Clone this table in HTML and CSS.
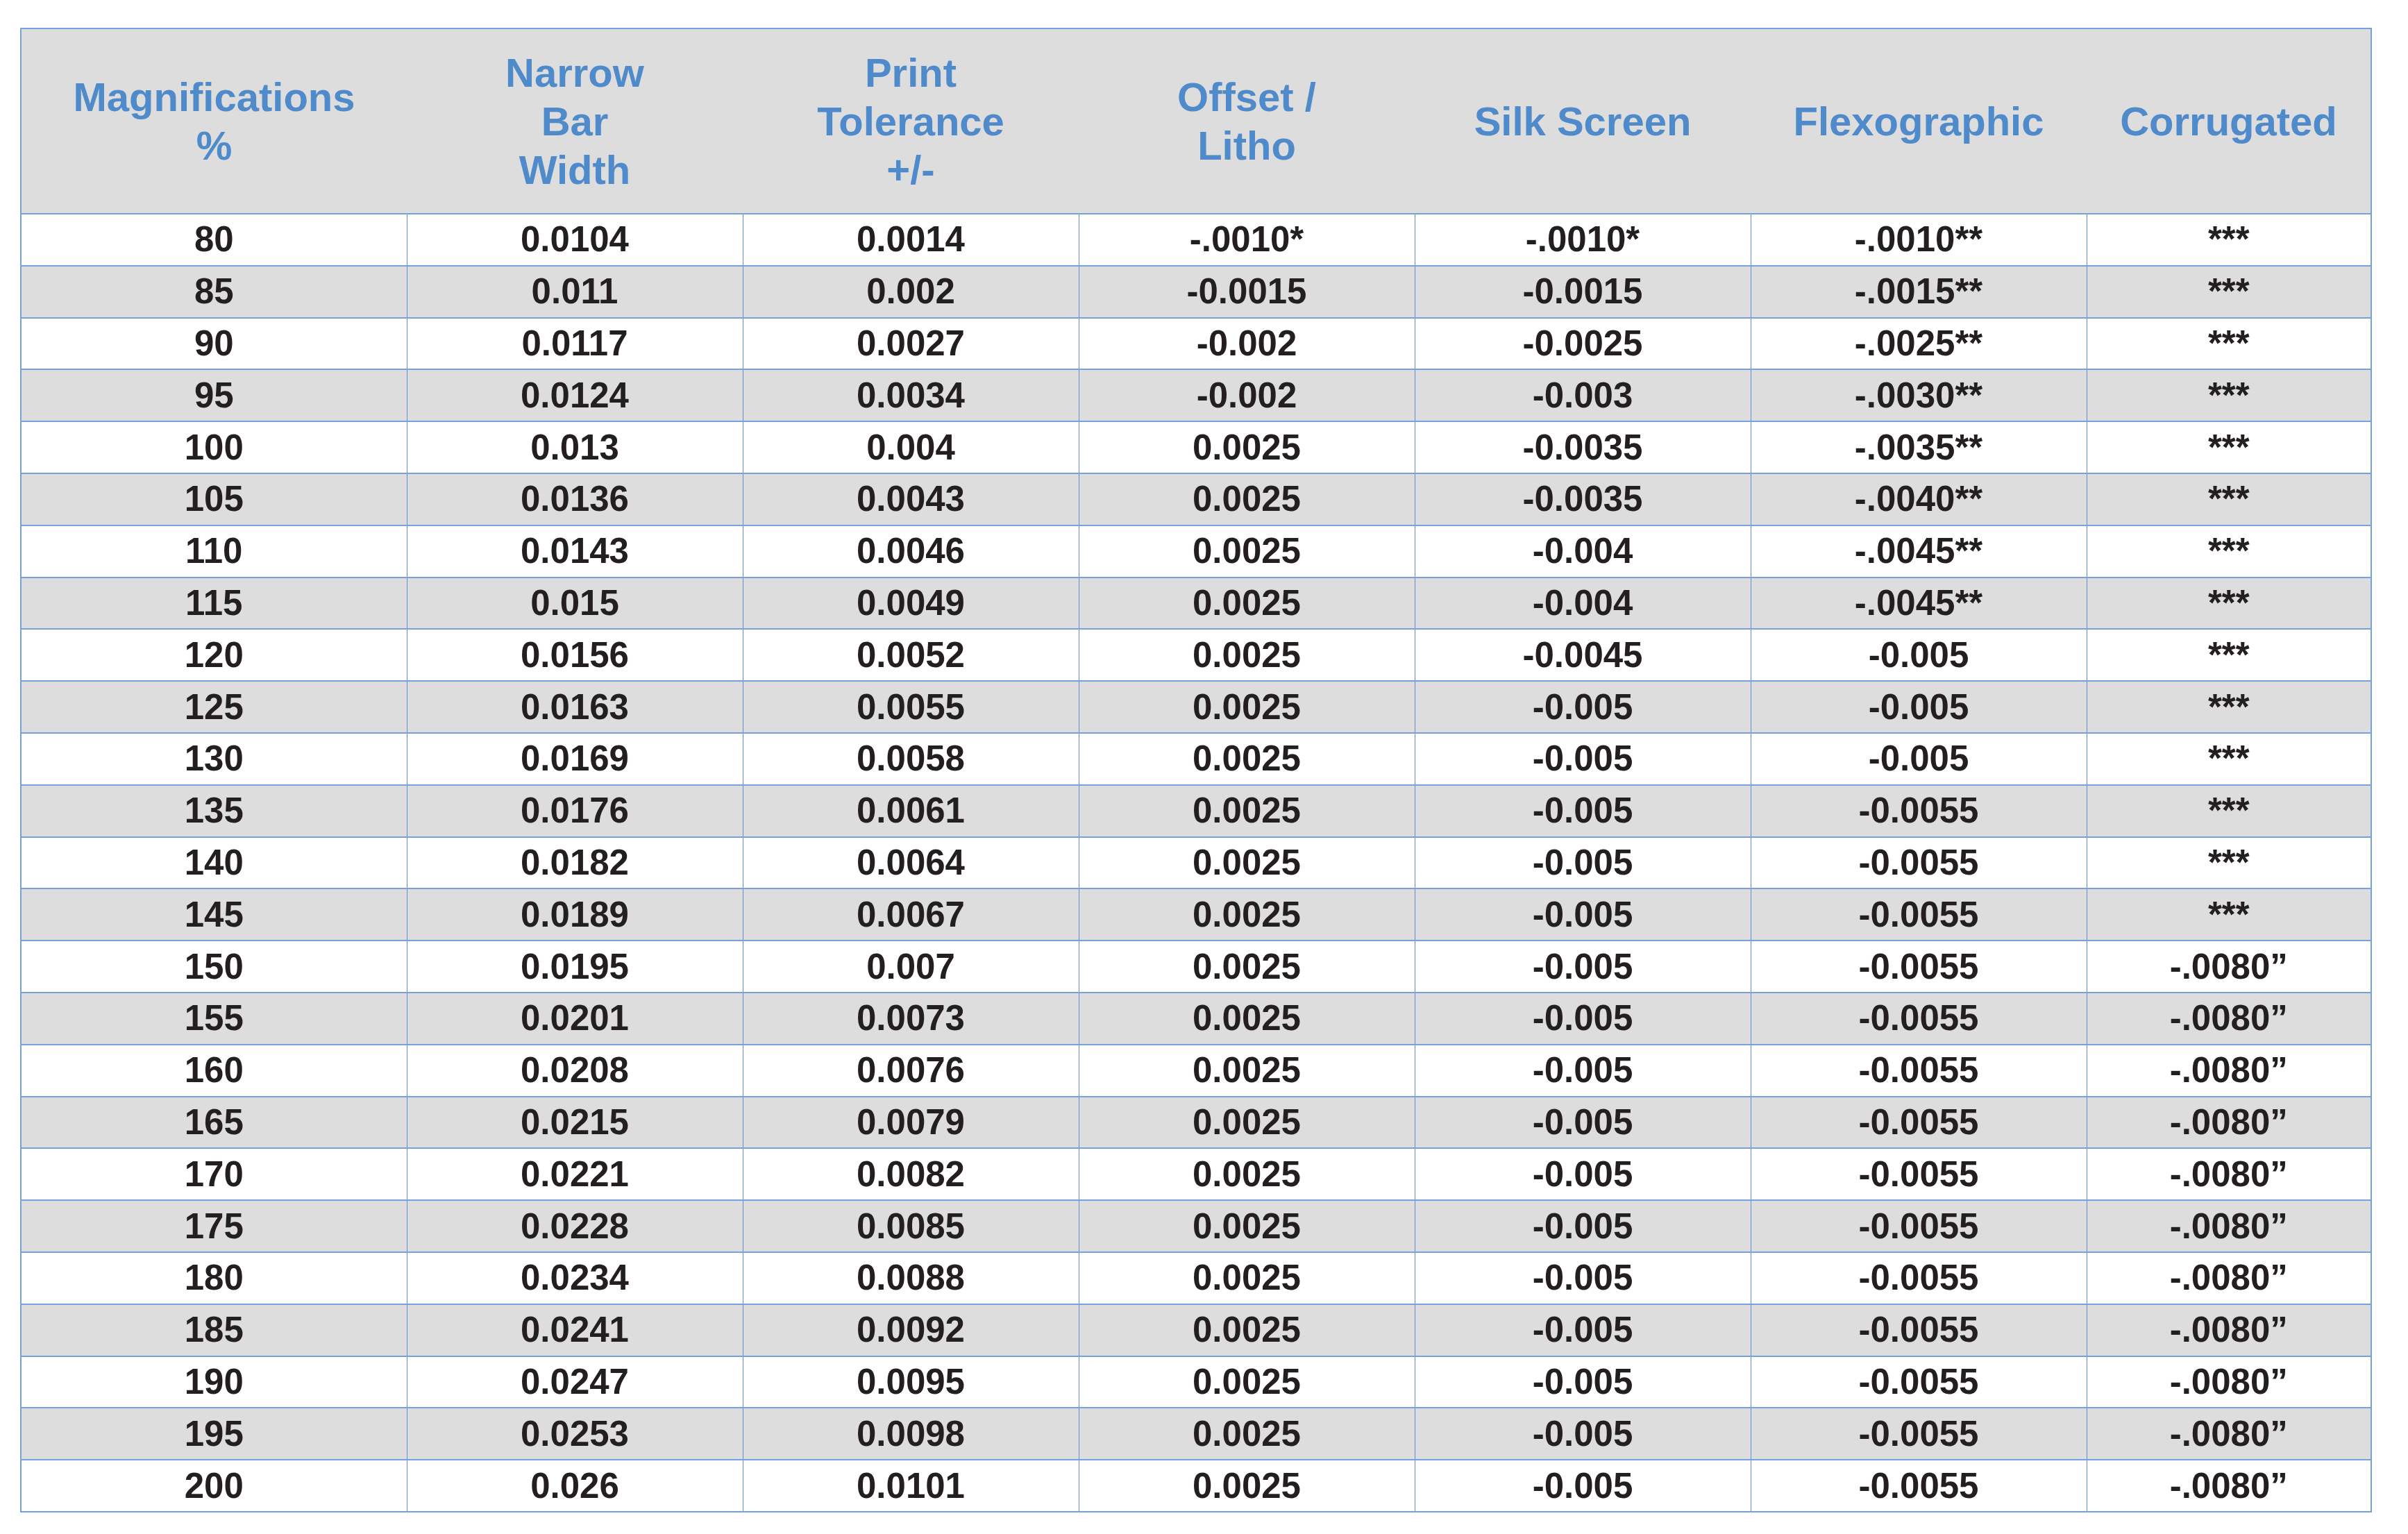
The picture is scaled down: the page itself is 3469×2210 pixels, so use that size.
FILE: index.html
```html
<!DOCTYPE html>
<html lang="en">
<head>
<meta charset="utf-8">
<title>Magnification table</title>
<link rel="stylesheet" href="styles.css">
</head>
<body>
<table class="spec">
  <colgroup>
    <col class="c-mag">
    <col class="c-std">
    <col class="c-std">
    <col class="c-std">
    <col class="c-std">
    <col class="c-std">
    <col class="c-last">
  </colgroup>
  <thead>
    <tr class="head-row">
      <th>Magnifications<br>%</th>
      <th>Narrow<br>Bar<br>Width</th>
      <th>Print<br>Tolerance<br>+/-</th>
      <th>Offset /<br>Litho</th>
      <th>Silk Screen</th>
      <th>Flexographic</th>
      <th>Corrugated</th>
    </tr>
  </thead>
  <tbody>
    <tr><td>80</td><td>0.0104</td><td>0.0014</td><td>-.0010*</td><td>-.0010*</td><td>-.0010**</td><td>***</td></tr>
    <tr><td>85</td><td>0.011</td><td>0.002</td><td>-0.0015</td><td>-0.0015</td><td>-.0015**</td><td>***</td></tr>
    <tr><td>90</td><td>0.0117</td><td>0.0027</td><td>-0.002</td><td>-0.0025</td><td>-.0025**</td><td>***</td></tr>
    <tr><td>95</td><td>0.0124</td><td>0.0034</td><td>-0.002</td><td>-0.003</td><td>-.0030**</td><td>***</td></tr>
    <tr><td>100</td><td>0.013</td><td>0.004</td><td>0.0025</td><td>-0.0035</td><td>-.0035**</td><td>***</td></tr>
    <tr><td>105</td><td>0.0136</td><td>0.0043</td><td>0.0025</td><td>-0.0035</td><td>-.0040**</td><td>***</td></tr>
    <tr><td>110</td><td>0.0143</td><td>0.0046</td><td>0.0025</td><td>-0.004</td><td>-.0045**</td><td>***</td></tr>
    <tr><td>115</td><td>0.015</td><td>0.0049</td><td>0.0025</td><td>-0.004</td><td>-.0045**</td><td>***</td></tr>
    <tr><td>120</td><td>0.0156</td><td>0.0052</td><td>0.0025</td><td>-0.0045</td><td>-0.005</td><td>***</td></tr>
    <tr><td>125</td><td>0.0163</td><td>0.0055</td><td>0.0025</td><td>-0.005</td><td>-0.005</td><td>***</td></tr>
    <tr><td>130</td><td>0.0169</td><td>0.0058</td><td>0.0025</td><td>-0.005</td><td>-0.005</td><td>***</td></tr>
    <tr><td>135</td><td>0.0176</td><td>0.0061</td><td>0.0025</td><td>-0.005</td><td>-0.0055</td><td>***</td></tr>
    <tr><td>140</td><td>0.0182</td><td>0.0064</td><td>0.0025</td><td>-0.005</td><td>-0.0055</td><td>***</td></tr>
    <tr><td>145</td><td>0.0189</td><td>0.0067</td><td>0.0025</td><td>-0.005</td><td>-0.0055</td><td>***</td></tr>
    <tr><td>150</td><td>0.0195</td><td>0.007</td><td>0.0025</td><td>-0.005</td><td>-0.0055</td><td>-.0080&#8221;</td></tr>
    <tr><td>155</td><td>0.0201</td><td>0.0073</td><td>0.0025</td><td>-0.005</td><td>-0.0055</td><td>-.0080&#8221;</td></tr>
    <tr><td>160</td><td>0.0208</td><td>0.0076</td><td>0.0025</td><td>-0.005</td><td>-0.0055</td><td>-.0080&#8221;</td></tr>
    <tr><td>165</td><td>0.0215</td><td>0.0079</td><td>0.0025</td><td>-0.005</td><td>-0.0055</td><td>-.0080&#8221;</td></tr>
    <tr><td>170</td><td>0.0221</td><td>0.0082</td><td>0.0025</td><td>-0.005</td><td>-0.0055</td><td>-.0080&#8221;</td></tr>
    <tr><td>175</td><td>0.0228</td><td>0.0085</td><td>0.0025</td><td>-0.005</td><td>-0.0055</td><td>-.0080&#8221;</td></tr>
    <tr><td>180</td><td>0.0234</td><td>0.0088</td><td>0.0025</td><td>-0.005</td><td>-0.0055</td><td>-.0080&#8221;</td></tr>
    <tr><td>185</td><td>0.0241</td><td>0.0092</td><td>0.0025</td><td>-0.005</td><td>-0.0055</td><td>-.0080&#8221;</td></tr>
    <tr><td>190</td><td>0.0247</td><td>0.0095</td><td>0.0025</td><td>-0.005</td><td>-0.0055</td><td>-.0080&#8221;</td></tr>
    <tr><td>195</td><td>0.0253</td><td>0.0098</td><td>0.0025</td><td>-0.005</td><td>-0.0055</td><td>-.0080&#8221;</td></tr>
    <tr><td>200</td><td>0.026</td><td>0.0101</td><td>0.0025</td><td>-0.005</td><td>-0.0055</td><td>-.0080&#8221;</td></tr>
  </tbody>
</table>
</body>
</html>
```

FILE: styles.css
```css
html, body {
  margin: 0;
  padding: 0;
  background: #ffffff;
}

body {
  padding: 40px 0 0 29px;
  font-family: "Liberation Sans", Arial, Helvetica, sans-serif;
}

.spec {
  table-layout: fixed;
  border-collapse: collapse;
  width: 3382px;
  border: 2px solid #74a2da;
}

.c-mag { width: 556px; }
.c-std { width: 484px; }
.c-last { width: 410px; }

.spec th {
  height: 265px;
  padding: 0;
  background: #dddddd;
  color: #4f8aca;
  font-size: 58px;
  line-height: 70px;
  font-weight: 700;
  text-align: center;
  vertical-align: middle;
  border-bottom: 2px solid #74a2da;
}

.spec td {
  height: 72.8px;
  padding: 0;
  color: #231f20;
  font-size: 51px;
  line-height: 60px;
  font-weight: 700;
  text-align: center;
  vertical-align: middle;
  border-top: 2px solid #74a2da;
  border-bottom: 2px solid #74a2da;
  border-left: 1px solid #5b8fd1;
  border-right: 1px solid #5b8fd1;
}

.spec td:first-child { border-left: 2px solid #74a2da; }
.spec td:last-child { border-right: 2px solid #74a2da; }

.spec tbody tr:nth-child(odd) td { background: #ffffff; }
.spec tbody tr:nth-child(even) td { background: #dddddd; }
```
